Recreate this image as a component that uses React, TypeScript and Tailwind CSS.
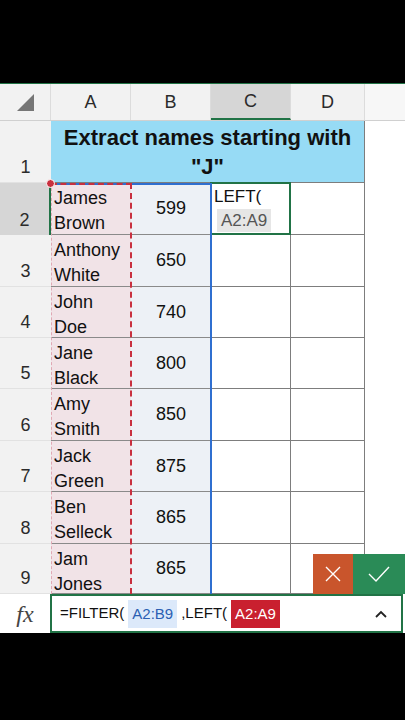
import React from "react";

const rows = [
  { n: 2, first: "James", last: "Brown", v: 599, h: 52 },
  { n: 3, first: "Anthony", last: "White", v: 650, h: 52 },
  { n: 4, first: "John", last: "Doe", v: 740, h: 51 },
  { n: 5, first: "Jane", last: "Black", v: 800, h: 51 },
  { n: 6, first: "Amy", last: "Smith", v: 850, h: 52 },
  { n: 7, first: "Jack", last: "Green", v: 875, h: 51 },
  { n: 8, first: "Ben", last: "Selleck", v: 865, h: 52 },
  { n: 9, first: "Jam", last: "Jones", v: 865, h: 50 },
];

const cols = ["A", "B", "C", "D"];
const colW = ["w-[80px]", "w-[80px]", "w-[80px]", "w-[74px]"];

function HeaderRow() {
  return (
    <div className="flex h-[37px] border-b border-[#d0d0d0] bg-[#f2f2f2]">
      <div className="flex w-[51px] items-center justify-center border-r border-[#dcdcdc]">
        <svg width="17" height="17" viewBox="0 0 17 17">
          <polygon points="17,0 17,17 0,17" fill="#767676" />
        </svg>
      </div>
      {cols.map((c, i) => (
        <div
          key={c}
          className={`${colW[i]} flex items-center justify-center border-r border-[#dcdcdc] text-[18px] text-[#2b2b2b] ${
            c === "C" ? "border-b-2 border-b-[#217346] bg-[#d6d6d6]" : ""
          }`}
        >
          {c}
        </div>
      ))}
      <div className="flex-1 bg-[#f7f7f7]" />
    </div>
  );
}

function TitleRow() {
  return (
    <div className="flex h-[62px]">
      <div className="flex w-[51px] items-end justify-center border-b border-[#e2e2e2] bg-[#f2f2f2] pb-[1px] text-[18px] text-[#2b2b2b]">
        1
      </div>
      <div className="flex w-[314px] flex-col items-center justify-center border-b border-r border-[#7d7d7d] bg-[#97dbf5] text-[22px] font-bold leading-[29px] text-[#111]">
        <span>Extract names starting with</span>
        <span>"J"</span>
      </div>
      <div className="flex-1 bg-white" />
    </div>
  );
}

function DataRow({ r }: { r: (typeof rows)[number] }) {
  const active = r.n === 2;
  return (
    <div className="flex" style={{ height: r.h }}>
      <div
        className={`flex w-[51px] items-end justify-center pb-[1px] text-[18px] text-[#2b2b2b] ${
          active
            ? "border-r-2 border-r-[#217346] bg-[#d6d6d6]"
            : "border-b border-[#e2e2e2] bg-[#f2f2f2]"
        }`}
      >
        {r.n}
      </div>
      <div className="flex w-[80px] flex-col border-b border-[#8a8a8a] bg-[#f1e3e7] px-[3px] pt-[3px] text-[18px] leading-[25px] text-[#111]">
        <span>{r.first}</span>
        <span>{r.last}</span>
      </div>
      <div className="flex w-[80px] items-center justify-center border-b border-[#8a8a8a] bg-[#edf1f6] text-[18px] text-[#111]">
        {r.v}
      </div>
      <div className="relative w-[80px] border-b border-r border-[#7d7d7d] bg-white">
        {active && (
          <div className="absolute inset-[-1px] border-2 border-[#217346] px-[2px] pt-[2px]">
            <div className="text-[17px] leading-[21px] text-[#111]">LEFT(</div>
            <div className="ml-[3px] mt-[2px] inline-block bg-[#e6e6e6] px-[4px] text-[17px] leading-[23px] text-[#555]">
              A2:A9
            </div>
          </div>
        )}
      </div>
      <div className="w-[74px] border-b border-r border-[#7d7d7d] bg-white" />
      <div className="flex-1 bg-white" />
    </div>
  );
}

function FormulaBar() {
  return (
    <div className="flex h-[39px] bg-white">
      <div className="flex w-[50px] items-center justify-center font-['Liberation_Serif',serif] text-[24px] italic text-[#444]">
        fx
      </div>
      <div className="mr-[2px] flex flex-1 items-center border-2 border-[#217346] pl-[8px] pr-[14px] text-[15px] text-[#111]">
        <span>=FILTER(</span>
        <span className="ml-[4px] bg-[#dce9fa] px-[4px] leading-[28px] text-[#2b5fb3]">A2:B9</span>
        <span className="ml-[4px]">,LEFT(</span>
        <span className="ml-[4px] bg-[#c9202f] px-[4px] leading-[28px] text-white">A2:A9</span>
        <span className="flex-1" />
        <svg width="12" height="8" viewBox="0 0 12 8">
          <polyline points="1,7 6,2 11,7" fill="none" stroke="#222" strokeWidth="1.8" />
        </svg>
      </div>
    </div>
  );
}

export default function App() {
  return (
    <div className="relative flex h-[720px] w-[405px] flex-col overflow-hidden bg-black font-['Liberation_Sans',Arial,sans-serif]">
      <div className="h-[83px] bg-black" />
      <div className="h-[1px] bg-[#217346]" />
      <HeaderRow />
      <TitleRow />
      <div className="relative">
        {rows.map((r) => (
          <DataRow key={r.n} r={r} />
        ))}
        {/* range A2:B9 */}
        <div className="pointer-events-none absolute left-[51px] top-0 h-full w-[161px] border-r-2 border-t-2 border-[#2f6fd0]" />
        {/* range A2:A9 */}
        <div className="pointer-events-none absolute left-[51px] top-0 h-full w-[81px] border-r-2 border-t-2 border-dashed border-[#c8303f]" />
        <div className="pointer-events-none absolute left-[51px] top-0 h-full border-l border-dashed border-[#e0a8b4]" />
        <div className="absolute left-[46px] top-[-4px] h-[9px] w-[9px] rounded-full border border-white bg-[#c8303f]" />
      </div>
      <FormulaBar />
      <div className="flex-1 bg-black" />
      <div className="absolute left-[313px] top-[554px] flex h-[40px]">
        <div className="flex w-[40px] items-center justify-center bg-[#c9552c]">
          <svg width="20" height="20" viewBox="0 0 20 20">
            <path d="M3 3 L17 17 M17 3 L3 17" stroke="#fff" strokeWidth="1.4" fill="none" />
          </svg>
        </div>
        <div className="flex w-[52px] items-center justify-center bg-[#2a8b57]">
          <svg width="24" height="18" viewBox="0 0 24 18">
            <path d="M2 9 L9 16 L22 2" stroke="#fff" strokeWidth="1.4" fill="none" />
          </svg>
        </div>
      </div>
    </div>
  );
}
